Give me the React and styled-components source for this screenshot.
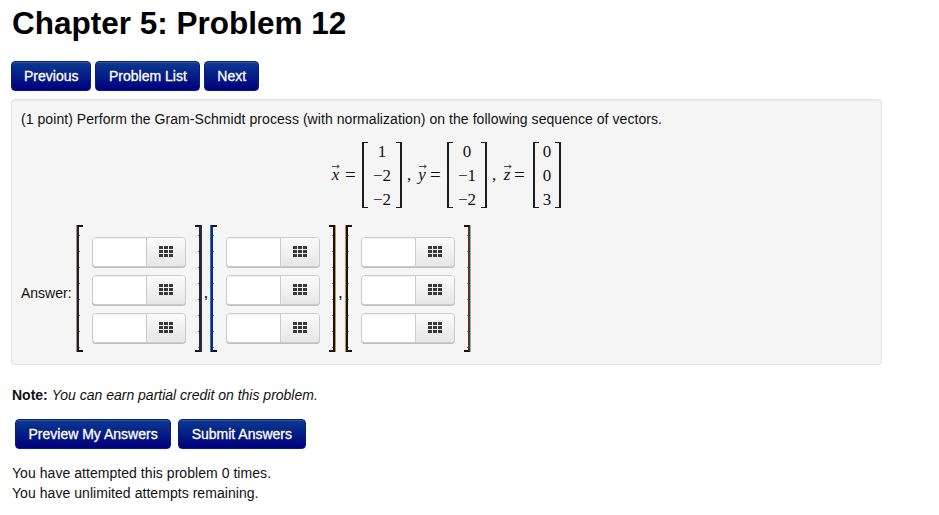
import React from "react";
import styled, { createGlobalStyle } from "styled-components";

const Global = createGlobalStyle`
  html, body { margin: 0; padding: 0; background: #fff; }
  body { font-family: "Liberation Sans", Arial, sans-serif; font-size: 14px; line-height: 20px; color: #1a1a1a; }
`;

const Page = styled.main`
  width: 939px;
  height: 515px;
  box-sizing: border-box;
  padding: 0 0 0 11px;
  overflow: hidden;
`;

const Title = styled.h1`
  margin: 0 0 0 1px;
  height: 61px;
  padding-top: 3px;
  box-sizing: border-box;
  font-size: 31.5px;
  line-height: 40px;
  font-weight: 700;
  color: #000;
`;

const ButtonRow = styled.nav`
  display: flex;
  gap: 4px;
  margin-bottom: 8px;
`;

const ActionRow = styled.div`
  display: flex;
  gap: 7px;
  margin: 14px 0 14px 4px;
`;

const Button = styled.button`
  height: 30px;
  box-sizing: border-box;
  padding: 0 ${(p) => p.$pad}px;
  border: 1px solid #0a1f78;
  border-radius: 4px;
  background: linear-gradient(#0b3a90, #00007c);
  color: #fff;
  font: 400 14px/20px "Liberation Sans", Arial, sans-serif;
  -webkit-text-stroke: 0.3px #fff;
  text-shadow: 0 -1px 0 rgba(0, 0, 0, 0.25);
  box-shadow: inset 0 1px 0 rgba(255, 255, 255, 0.15), 0 1px 2px rgba(0, 0, 0, 0.05);
`;

const Well = styled.section`
  width: 871px;
  height: 266px;
  box-sizing: border-box;
  padding: 9px 9px 0;
  background: #f5f5f5;
  border: 1px solid #e3e3e3;
  border-radius: 4px;
  box-shadow: inset 0 1px 1px rgba(0, 0, 0, 0.05);
`;

const Statement = styled.p`
  margin: 0;
  color: #111;
  letter-spacing: 0.06px;
`;

const Display = styled.div`
  display: flex;
  align-items: center;
  height: 68px;
  margin: 12px 0 0 309px;
  font-family: "Liberation Serif", "Times New Roman", serif;
  font-size: 17px;
  color: #111;
`;

const Sym = styled.span`
  position: relative;
  display: inline-block;
  font-style: italic;
  width: ${(p) => p.$w}px;
  text-align: center;
`;

const Arrow = styled.svg`
  position: absolute;
  left: 1px;
  top: -1px;
  width: 9px;
  height: 5px;
`;

const Eq = styled.span`
  flex: 0 0 11px;
  font-size: 19px;
  margin: 0 ${(p) => p.$r}px 0 ${(p) => p.$l}px;
`;

const Comma = styled.span`
  width: ${(p) => p.$w}px;
  padding-left: 5px;
  box-sizing: border-box;
`;

const Mat = styled.div`
  display: grid;
  grid-template-columns: 6px ${(p) => p.$inner}px 6px;
  height: 66px;
`;

const MatCol = styled.div`
  display: grid;
  grid-template-rows: repeat(3, 24px);
  margin: -2px 0 -4px;
  justify-items: center;
  align-items: center;
  white-space: nowrap;
`;

const Bracket = styled.div`
  box-sizing: border-box;
  border: 0 solid #1c1c1c;
  border-width: 1.5px 0;
  ${(p) => (p.$right ? "border-right-width: 2px;" : "border-left-width: 2px;")}
`;

const AnswerRow = styled.div`
  display: flex;
  align-items: center;
  height: 127px;
  margin-top: 17px;
`;

const Label = styled.span`
  width: 56px;
  color: #111;
  padding-top: 7px;
`;

const TallBracket = styled.div`
  width: 6px;
  height: 127px;
  margin-bottom: 3px;
  box-sizing: border-box;
  border: 0 solid #111;
  border-width: 2px 0;
  ${(p) => (p.$right ? "border-right: 2px solid " : "border-left: 2px solid ")}${(p) => p.$stem};
  background: repeating-linear-gradient(rgba(0, 0, 0, 0.55) 0 1px, transparent 1px 16px) ${(p) => (p.$right ? "right" : "left")} 8px / 1px 100% no-repeat;
  box-shadow: -1px 0 0 0 ${(p) => (p.$right ? "transparent" : p.$before)}, 1px 0 0 0 ${(p) => (p.$right ? p.$after : "transparent")};
`;

const Column = styled.div`
  display: flex;
  flex-direction: column;
  gap: 8px;
  margin: 0 9px;
`;

const MatrixGroup = styled.div`
  display: flex;
  align-items: center;
`;

const Sep = styled.span`
  width: ${(p) => p.$w}px;
  font-size: 12px;
  font-weight: 700;
  line-height: 12px;
  text-align: center;
  color: #111;
  padding-top: 8px;
`;

const InputGroup = styled.div`
  display: flex;
  width: 94px;
  height: 30px;
  box-sizing: border-box;
  border: 1px solid #ccc;
  border-radius: 4px;
  background: #fff;
  overflow: hidden;
  box-shadow: 0 1px 0 #bdbdbd;
`;

const Field = styled.input`
  flex: 0 0 54px;
  width: 54px;
  box-sizing: border-box;
  border: 0;
  border-right: 1px solid #ccc;
  padding: 0;
  background: #fff;
  box-shadow: inset 0 1px 1px rgba(0, 0, 0, 0.06);
  outline: none;
`;

const Palette = styled.span`
  flex: 1;
  display: flex;
  align-items: center;
  justify-content: center;
  background: linear-gradient(#fbfbfb, #e6e6e6);
`;

const Note = styled.p`
  margin: 20px 0 0 1px;
  color: #111;
`;

const Status = styled.p`
  margin: 0 0 0 1px;
  color: #111;
  letter-spacing: 0.05px;
`;

const VecArrow = () => (
  <Arrow viewBox="0 0 9 5">
    <path d="M1 2.5H8M6 .8 8.3 2.5 6 4.2" fill="none" stroke="#222" strokeWidth=".8" />
  </Arrow>
);

const GridIcon = () => (
  <svg width="14" height="11" viewBox="0 0 14 11" style={{ display: "block" }}>
    {[0, 4, 8].flatMap((y) =>
      [0, 5, 10].map((x) => <rect key={`${x}-${y}`} x={x} y={y} width="4" height="3" fill="#383838" />)
    )}
  </svg>
);

const MathMatrix = ({ values, inner }) => (
  <Mat $inner={inner}>
    <Bracket />
    <MatCol>
      {values.map((v, i) => (
        <span key={i}>{v}</span>
      ))}
    </MatCol>
    <Bracket $right />
  </Mat>
);

const Answer = () => (
  <InputGroup>
    <Field aria-label="answer" />
    <Palette>
      <GridIcon />
    </Palette>
  </InputGroup>
);

const AnswerMatrix = ({ open, close }) => (
  <MatrixGroup>
    <TallBracket $stem={open[0]} $before={open[1]} />
    <Column>
      <Answer />
      <Answer />
      <Answer />
    </Column>
    <TallBracket $right $stem={close[0]} $after={close[1]} />
  </MatrixGroup>
);

export default function App() {
  return (
    <Page>
      <Global />
      <Title>Chapter 5: Problem 12</Title>
      <ButtonRow>
        <Button $pad={12}>Previous</Button>
        <Button $pad={12.5}>Problem List</Button>
        <Button $pad={12}>Next</Button>
      </ButtonRow>
      <Well>
        <Statement>(1 point) Perform the Gram-Schmidt process (with normalization) on the following sequence of vectors.</Statement>
        <Display>
          <Sym $w={11}>
            <VecArrow />x
          </Sym>
          <Eq $l={4} $r={6}>=</Eq>
          <MathMatrix values={["1", "−2", "−2"]} inner={28} />
          <Comma $w={15}>,</Comma>
          <Sym $w={10}>
            <VecArrow />y
          </Sym>
          <Eq $l={3} $r={6}>=</Eq>
          <MathMatrix values={["0", "−1", "−2"]} inner={28} />
          <Comma $w={15}>,</Comma>
          <Sym $w={10}>
            <VecArrow />z
          </Sym>
          <Eq $l={2} $r={8}>=</Eq>
          <MathMatrix values={["0", "0", "3"]} inner={16} />
        </Display>
        <AnswerRow>
          <Label>Answer:</Label>
          <AnswerMatrix open={["#101f5c", "#d98a2c"]} close={["#3a2418", "#12328c"]} />
          <Sep $w={10}>,</Sep>
          <AnswerMatrix open={["#0f2a70", "#1f78c8"]} close={["#111", "#d9902c"]} />
          <Sep $w={11}>,</Sep>
          <AnswerMatrix open={["#111", "#d9902c"]} close={["#6a3010", "#6ab8e8"]} />
        </AnswerRow>
      </Well>
      <Note>
        <b>Note:</b> <i>You can earn partial credit on this problem.</i>
      </Note>
      <ActionRow>
        <Button $pad={12.5}>Preview My Answers</Button>
        <Button $pad={12.5}>Submit Answers</Button>
      </ActionRow>
      <Status>You have attempted this problem 0 times.</Status>
      <Status>You have unlimited attempts remaining.</Status>
    </Page>
  );
}
